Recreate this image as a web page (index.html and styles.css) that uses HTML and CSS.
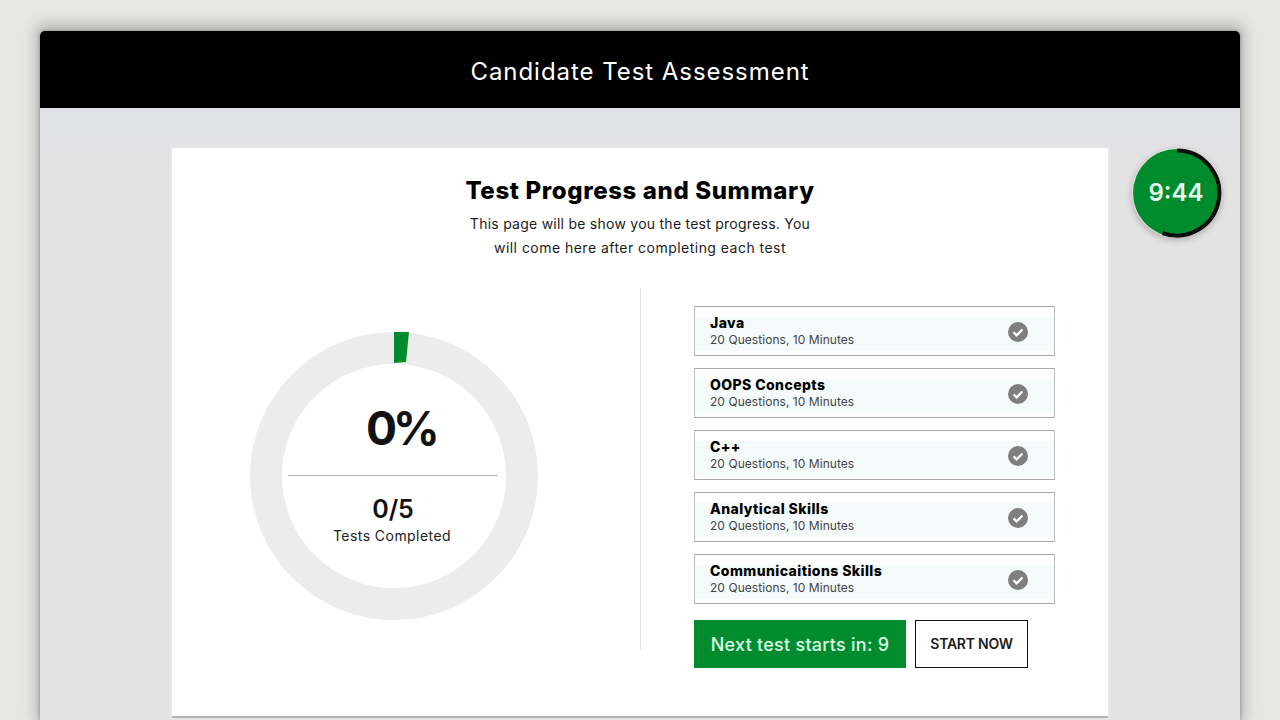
FILE: index.html
```html
<!DOCTYPE html>
<html lang="en">
<head>
<meta charset="utf-8">
<title>Candidate Test Assessment</title>
<link rel="stylesheet" href="styles.css">
</head>
<body>
<div class="shell">
  <header class="topbar">Candidate Test Assessment</header>
  <main class="stage">
    <section class="card">
      <h1 class="title">Test Progress and Summary</h1>
      <p class="intro">This page will be show you the test progress. You<br><span class="intro-second">will come here after completing each test</span></p>
      <div class="columns">
        <div class="left">
          <div class="ring">
            <svg class="ring-svg" width="288" height="288" viewBox="0 0 288 288">
              <circle cx="144" cy="144" r="128" fill="none" stroke="#ececec" stroke-width="32"/>
              <polygon points="144,0 159,0 156,30 144,31" fill="#008c2e"/>
            </svg>
            <div class="percent">0%</div>
            <div class="ring-rule"></div>
            <div class="count">0/5</div>
            <div class="count-label">Tests Completed</div>
          </div>
        </div>
        <div class="right">
          <ul class="tests">
            <li class="test"><div><div class="test-name">Java</div><div class="test-meta">20 Questions, 10 Minutes</div></div>
              <svg class="tick" width="20" height="20" viewBox="0 0 20 20"><circle cx="10" cy="10" r="10" fill="#7f7f7f"/><path d="M5.6 10.4l3 3 5.8-6" fill="none" stroke="#fff" stroke-width="2.2"/></svg></li>
            <li class="test"><div><div class="test-name">OOPS Concepts</div><div class="test-meta">20 Questions, 10 Minutes</div></div>
              <svg class="tick" width="20" height="20" viewBox="0 0 20 20"><circle cx="10" cy="10" r="10" fill="#7f7f7f"/><path d="M5.6 10.4l3 3 5.8-6" fill="none" stroke="#fff" stroke-width="2.2"/></svg></li>
            <li class="test"><div><div class="test-name">C++</div><div class="test-meta">20 Questions, 10 Minutes</div></div>
              <svg class="tick" width="20" height="20" viewBox="0 0 20 20"><circle cx="10" cy="10" r="10" fill="#7f7f7f"/><path d="M5.6 10.4l3 3 5.8-6" fill="none" stroke="#fff" stroke-width="2.2"/></svg></li>
            <li class="test"><div><div class="test-name">Analytical Skills</div><div class="test-meta">20 Questions, 10 Minutes</div></div>
              <svg class="tick" width="20" height="20" viewBox="0 0 20 20"><circle cx="10" cy="10" r="10" fill="#7f7f7f"/><path d="M5.6 10.4l3 3 5.8-6" fill="none" stroke="#fff" stroke-width="2.2"/></svg></li>
            <li class="test"><div><div class="test-name">Communicaitions Skills</div><div class="test-meta">20 Questions, 10 Minutes</div></div>
              <svg class="tick" width="20" height="20" viewBox="0 0 20 20"><circle cx="10" cy="10" r="10" fill="#7f7f7f"/><path d="M5.6 10.4l3 3 5.8-6" fill="none" stroke="#fff" stroke-width="2.2"/></svg></li>
          </ul>
          <div class="actions">
            <div class="next">Next test starts in: 9</div>
            <button class="start" type="button">START NOW</button>
          </div>
        </div>
      </div>
    </section>
    <div class="timer">
      <svg width="90" height="90" viewBox="0 0 90 90">
        <circle cx="45" cy="45" r="44" fill="#008c2e"/>
        <path d="M45 2.5A42.5 42.5 0 1 1 30.5 85" fill="none" stroke="#0c0c0c" stroke-width="4"/>
      </svg>
      <span class="timer-text">9:44</span>
    </div>
  </main>
</div>
</body>
</html>
```
FILE: styles.css
```css
* { box-sizing: border-box; }
html, body { margin: 0; height: 720px; overflow: hidden; }
body {
  background: #e7e7e5;
  font-family: Inter, "Noto Sans", "Liberation Sans", sans-serif;
  color: #111;
  padding: 31px 40px 0;
}
.shell {
  width: 1200px;
  height: 689px;
  border-radius: 5px 5px 0 0;
  box-shadow: 0 0 3px 1px rgba(0,0,0,.2), 0 -3px 14px 5px rgba(0,0,0,.2);
  display: flex;
  flex-direction: column;
  background: #e3e3e3;
}
.topbar {
  height: 77px;
  flex: none;
  background: #000;
  color: #fff;
  border-radius: 5px 5px 0 0;
  display: flex;
  align-items: center;
  justify-content: center;
  font-size: 24px;
  letter-spacing: .95px;
  padding-top: 3px;
}
.stage {
  position: relative;
  flex: 1;
  padding-top: 40px;
  background: linear-gradient(#e1e2e6 0, #e1e2e6 20px, #e3e3e3 60px);
}
.card {
  width: 936px;
  height: 568px;
  margin-left: 132px;
  background: #fff;
  box-shadow: 0 2px 0 #b5b5b5, 0 0 3px rgba(255,255,255,.7);
  padding-top: 28px;
}
.title {
  margin: 0;
  text-align: center;
  font-size: 24px;
  line-height: 30px;
  font-weight: 800;
  letter-spacing: .62px;
  color: #000;
}
.intro {
  margin: 6px 0 0;
  text-align: center;
  font-size: 14px;
  line-height: 24px;
  letter-spacing: .25px;
  color: #1c1c1c;
}
.intro-second { letter-spacing: .47px; }
.columns {
  display: grid;
  grid-template-columns: 469px 1fr;
  margin-top: 28px;
}
.left {
  height: 362px;
  border-right: 1px solid #e2e2e2;
  padding: 44px 0 0 78px;
}
.ring { position: relative; width: 288px; height: 288px; }
.ring-svg { display: block; }
.percent {
  position: absolute;
  left: 116px; top: 64px;
  font-size: 46px;
  line-height: 64px;
  font-weight: 700;
  letter-spacing: -4px;
}
.ring-rule {
  position: absolute;
  left: 38px; top: 143px;
  width: 210px; height: 1px;
  background: #b4b4b4;
}
.count {
  position: absolute;
  left: 0; width: 286px; top: 160px;
  text-align: center;
  font-size: 25px;
  line-height: 34px;
  font-weight: 600;
}
.count-label {
  position: absolute;
  left: 0; width: 284px; top: 194px;
  text-align: center;
  font-size: 14px;
  line-height: 20px;
  letter-spacing: .45px;
  color: #222;
}
.right { padding: 18px 0 0 53px; }
.tests {
  list-style: none;
  margin: 0; padding: 0;
  width: 361px;
  display: flex;
  flex-direction: column;
  gap: 12px;
}
.test {
  height: 50px;
  border-style: solid;
  border-width: 1px;
  border-color: #a8a8a8 #c0c0c0;
  background: linear-gradient(#fff 0, #fff 10px, #f5fbfb 10px, #f5fbfb 44px, #fff 44px);
  display: flex;
  align-items: center;
  justify-content: space-between;
  padding: 1px 26px 0 15px;
}
.test-name {
  font-size: 14px;
  line-height: 16px;
  font-weight: 800;
  letter-spacing: .42px;
  color: #000;
}
.test-meta {
  margin-top: 1px;
  font-size: 12px;
  line-height: 16px;
  letter-spacing: .05px;
  color: #444;
}
.tick { display: block; flex: none; }
.actions { display: flex; gap: 9px; margin-top: 16px; }
.next {
  width: 212px; height: 48px;
  background: #008c2e;
  color: #d9fde6;
  font-size: 18px;
  font-weight: 500;
  letter-spacing: .25px;
  display: flex;
  align-items: center;
  justify-content: center;
}
.start {
  width: 113px; height: 48px;
  padding: 0 0 2px;
  background: #fff;
  border: 1px solid #111;
  font: 600 14px Inter, "Noto Sans", sans-serif;
  letter-spacing: -.25px;
  color: #1c1c1c;
}
.timer {
  position: absolute;
  left: 1092px; top: 40px;
  width: 90px; height: 90px;
  display: flex;
  align-items: center;
  justify-content: center;
  border-radius: 50%;
  box-shadow: 0 2px 6px rgba(0,0,0,.25);
}
.timer svg { position: absolute; left: 0; top: 0; }
.timer-text {
  position: relative;
  top: -1px;
  left: -1px;
  font-size: 24px;
  font-weight: 600;
  color: #e6fdee;
}
```
